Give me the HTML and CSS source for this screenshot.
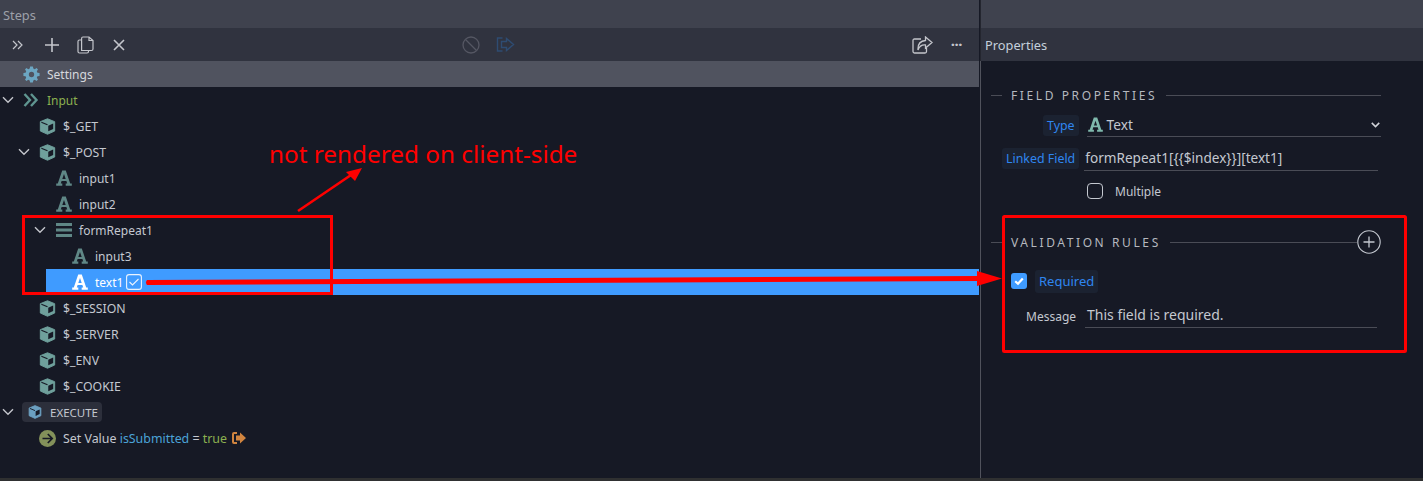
FILE: index.html
```html
<!DOCTYPE html>
<html lang="en">
<head>
<meta charset="utf-8">
<title>Steps</title>
<link rel="stylesheet" href="styles.css">
</head>
<body>
<svg class="defs" width="0" height="0" aria-hidden="true">
  <defs>
    <symbol id="cube" viewBox="0 0 18 18">
      <path fill="currentColor" stroke="currentColor" stroke-width="1" stroke-linejoin="round" d="M9 .8 16.6 3.9V13.8L9 17.2 1.4 13.8V3.9Z"/>
      <path fill="none" stroke="#161925" stroke-width="1.2" d="M2.5 4.4 9 7.2"/>
      <path fill="#161925" d="M9.8 8.1 15 5.8V11.6L9.8 14Z"/>
    </symbol>
    <symbol id="letter" viewBox="0 0 16 16">
      <path fill="currentColor" fill-rule="evenodd" d="M6.2.6H9.8L14.2 13.5H15.8V15.8H9.7V13.5H11.2L10.4 11H5.6L4.8 13.5H6.3V15.8H.2V13.5H1.8ZM8 4 6.3 9H9.7Z"/>
    </symbol>
    <symbol id="chev" viewBox="0 0 12 8">
      <path fill="none" stroke="currentColor" stroke-width="1.4" d="M1 1.2 6 6.2 11 1.2"/>
    </symbol>
  </defs>
</svg>
<main class="app">
  <section class="steps">
    <div class="title-bar">Steps</div>
    <div class="toolbar">
      <div class="tool-group">
        <svg class="tool t-fwd" width="12" height="10" viewBox="0 0 12 10"><path fill="none" stroke="currentColor" stroke-width="1.2" d="M1 1 5 5 1 9M6 1 10 5 6 9"/></svg>
        <svg class="tool t-plus" width="16" height="16" viewBox="0 0 16 16"><path fill="none" stroke="currentColor" stroke-width="1.6" d="M8 1V15M1 8H15"/></svg>
        <svg class="tool t-copy" width="17" height="18" viewBox="0 0 17 18"><path fill="none" stroke="currentColor" stroke-width="1.2" d="M4.6 14.5V2.5Q4.6 1 6 1H12L16 4.5V13Q16 14.5 14.5 14.5ZM4.6 4H2.5Q1 4 1 5.5V15.5Q1 17 2.5 17H10Q11.5 17 11.5 15.5V14.5M12 1V4.5H16"/></svg>
        <svg class="tool t-close" width="12" height="12" viewBox="0 0 12 12"><path fill="none" stroke="currentColor" stroke-width="1.6" d="M1 1 11 11M11 1 1 11"/></svg>
      </div>
      <div class="tool-mid">
        <svg class="dim-grey" width="18" height="18" viewBox="0 0 18 18"><circle cx="9" cy="9" r="8" fill="none" stroke="currentColor" stroke-width="1.3"/><path stroke="currentColor" stroke-width="1.3" d="M3.5 3.5 14.5 14.5"/></svg>
        <svg class="dim-blue" width="19" height="15" viewBox="0 0 19 15"><path fill="none" stroke="currentColor" stroke-width="1.4" d="M6.5 1H1.5V14H6.5M5.5 4.5H10.5V1.5L17.5 7.5 10.5 13.5V10.5H5.5Z"/></svg>
      </div>
      <div class="tool-right">
        <svg class="tool" width="21" height="18" viewBox="0 0 21 18"><path fill="none" stroke="currentColor" stroke-width="1.3" d="M9 3H2.5Q1 3 1 4.5V15.5Q1 17 2.5 17H13Q14.5 17 14.5 15.5V12M13.5 1 20 6.5 13.5 12V9Q8 8.5 6 14 5.5 5 13.5 4.5Z"/></svg>
        <span class="dots">···</span>
      </div>
    </div>
    <div class="settings-row">
      <svg class="gear" width="17" height="17" viewBox="0 0 16 16"><path fill="currentColor" fill-rule="evenodd" d="M6.7.4H9.3L9.7 2.4 11 3 12.8 1.9 14.1 3.2 13 5 13.6 6.3 15.6 6.7V9.3L13.6 9.7 13 11 14.1 12.8 12.8 14.1 11 13 9.7 13.6 9.3 15.6H6.7L6.3 13.6 5 13 3.2 14.1 1.9 12.8 3 11 2.4 9.7.4 9.3V6.7L2.4 6.3 3 5 1.9 3.2 3.2 1.9 5 3 6.3 2.4ZM8 5.5A2.5 2.5 0 1 0 8 10.5 2.5 2.5 0 1 0 8 5.5Z"/></svg>
      <span>Settings</span>
    </div>
    <ul class="tree">
      <li class="row lv0">
        <svg class="chev" width="12" height="8"><use href="#chev"/></svg>
        <svg class="ico-input" width="16" height="14" viewBox="0 0 16 14"><path fill="none" stroke="currentColor" stroke-width="2.4" d="M1.5 1 7 7 1.5 13M8 1 13.5 7 8 13"/></svg>
        <span class="lbl green">Input</span>
      </li>
      <li class="row lv1"><span class="nochev"></span><svg class="cube" width="17" height="17"><use href="#cube"/></svg><span class="lbl">$_GET</span></li>
      <li class="row lv1"><svg class="chev" width="12" height="8"><use href="#chev"/></svg><svg class="cube" width="17" height="17"><use href="#cube"/></svg><span class="lbl">$_POST</span></li>
      <li class="row lv2"><span class="nochev"></span><svg class="let" width="16" height="16"><use href="#letter"/></svg><span class="lbl">input1</span></li>
      <li class="row lv2"><span class="nochev"></span><svg class="let" width="16" height="16"><use href="#letter"/></svg><span class="lbl">input2</span></li>
      <li class="row lv2"><svg class="chev" width="12" height="8"><use href="#chev"/></svg>
        <svg class="let" width="16" height="14" viewBox="0 0 16 14"><path fill="currentColor" d="M0 0H16V3H0ZM0 5.5H16V8.5H0ZM0 11H16V14H0Z"/></svg>
        <span class="lbl">formRepeat1</span></li>
      <li class="row lv3"><span class="nochev"></span><svg class="let" width="16" height="16"><use href="#letter"/></svg><span class="lbl">input3</span></li>
      <li class="row lv3 selected"><span class="nochev"></span><svg class="let" width="16" height="16"><use href="#letter"/></svg><span class="lbl">text1</span>
        <svg class="row-check" width="16" height="16" viewBox="0 0 16 16"><rect x=".6" y=".6" width="14.8" height="14.8" rx="2.5" fill="none" stroke="currentColor" stroke-width="1.1"/><path fill="none" stroke="currentColor" stroke-width="1.1" d="M3.5 8 6.5 11 12.5 5"/></svg>
      </li>
      <li class="row lv1"><span class="nochev"></span><svg class="cube" width="17" height="17"><use href="#cube"/></svg><span class="lbl">$_SESSION</span></li>
      <li class="row lv1"><span class="nochev"></span><svg class="cube" width="17" height="17"><use href="#cube"/></svg><span class="lbl">$_SERVER</span></li>
      <li class="row lv1"><span class="nochev"></span><svg class="cube" width="17" height="17"><use href="#cube"/></svg><span class="lbl">$_ENV</span></li>
      <li class="row lv1"><span class="nochev"></span><svg class="cube" width="17" height="17"><use href="#cube"/></svg><span class="lbl">$_COOKIE</span></li>
      <li class="row lv0">
        <svg class="chev" width="12" height="8"><use href="#chev"/></svg>
        <span class="pill"><svg class="cube-blue" width="14" height="14"><use href="#cube"/></svg><span>EXECUTE</span></span>
      </li>
      <li class="row lv1 action">
        <span class="nochev"></span>
        <svg class="go" width="17" height="17" viewBox="0 0 17 17"><circle cx="8.5" cy="8.5" r="8.5" fill="#83915a"/><path fill="none" stroke="#161925" stroke-width="1.7" d="M3.5 8.5H13M8.8 4 13.2 8.5 8.8 13"/></svg>
        <span class="expr">Set Value <span class="c-blue">isSubmitted</span> = <span class="c-green">true</span></span>
        <svg class="exit" width="14" height="12" viewBox="0 0 14 12"><path fill="#d0843f" fill-rule="evenodd" d="M0 2Q0 0 2 0H5V2H2V10H5V12H2Q0 12 0 10ZM4 3.5H8V.5L14 6 8 11.5V8.5H4Z"/></svg>
      </li>
    </ul>
  </section>
  <aside class="props">
    <div class="title-spacer"></div>
    <div class="props-head">Properties</div>
    <div class="props-body">
      <div class="legend first"><span class="dash"></span><span class="legend-text">FIELD PROPERTIES</span><span class="rule"></span></div>
      <div class="field f-type">
        <span class="tag tag-type">Type</span>
        <div class="select">
          <svg class="sel-ico" width="15" height="15"><use href="#letter"/></svg>
          <span>Text</span>
          <svg class="sel-chev" width="9" height="6" viewBox="0 0 12 8"><path fill="none" stroke="currentColor" stroke-width="2" d="M1 1.2 6 6.2 11 1.2"/></svg>
        </div>
      </div>
      <div class="field f-link">
        <span class="tag tag-link">Linked Field</span>
        <div class="input input-link">formRepeat1[{{$index}}][text1]</div>
      </div>
      <label class="multi"><span class="box"></span><span>Multiple</span></label>
      <div class="legend second"><span class="dash"></span><span class="legend-text">VALIDATION RULES</span><span class="rule"></span>
        <svg class="add" width="24" height="24" viewBox="0 0 24 24"><circle cx="12" cy="12" r="11.2" fill="none" stroke="currentColor" stroke-width="1.1"/><path fill="none" stroke="currentColor" stroke-width="1.3" d="M12 6.5V17.5M6.5 12H17.5"/></svg>
      </div>
      <div class="req">
        <svg width="16" height="16" viewBox="0 0 16 16"><rect width="16" height="16" rx="3" fill="#3f9bff"/><path fill="none" stroke="#fff" stroke-width="2.2" d="M4.2 8.2 7 10.8 11.8 5.4"/></svg>
        <span class="tag tag-req">Required</span>
      </div>
      <div class="field f-msg">
        <span class="msg-label">Message</span>
        <div class="input input-msg">This field is required.</div>
      </div>
    </div>
  </aside>
  <svg class="annot" width="1423" height="481" viewBox="0 0 1423 481" aria-hidden="true">
    <g fill="none" stroke="#ff0000">
      <rect x="23.5" y="216.5" width="308" height="77" stroke-width="3"/>
      <rect x="1003.5" y="216.5" width="402" height="135" stroke-width="3" rx="1"/>
      <path stroke-width="2.6" d="M298 211 351 175"/>
    </g>
    <path fill="#ff0000" d="M362 168 346 172 355 181Z"/>
    <path fill="#ff0000" d="M147 280 978 276 978 281 147 285Q145 282.5 147 280Z"/>
    <path fill="#ff0000" d="M977 271 1002 278.5 977 286Z"/>
    <text class="annot-text" x="269" y="163">not rendered on client-side</text>
  </svg>
</main>
</body>
</html>
```
FILE: styles.css
```css
* { box-sizing: border-box; }
html, body { margin: 0; padding: 0; }
body {
  width: 1423px;
  height: 481px;
  overflow: hidden;
  background: #161925;
  color: #c4c8d0;
  font-family: "Noto Sans", "Open Sans", sans-serif;
  font-size: 12px;
}
.defs { position: absolute; }
.app {
  position: relative;
  display: flex;
  width: 1423px;
  height: 481px;
  border-bottom: 3px solid #2f3031;
}
.steps { width: 979px; flex: none; }
.props { flex: 1; margin-left: 1px; border-left: 1px solid #50525c; }

.title-bar {
  height: 28px;
  line-height: 31px;
  padding-left: 3px;
  background: #3f424e;
  color: #9da0a9;
  font-size: 12.8px;
}
.toolbar {
  height: 33px;
  display: flex;
  align-items: center;
  background: #30333f;
  color: #c4c6cc;
  position: relative;
}
.tool-group { display: flex; align-items: center; padding-left: 12px; }
.t-plus { margin-left: 20px; }
.t-copy { margin-left: 17px; }
.t-close { margin-left: 19px; }
.tool-mid { display: flex; align-items: center; gap: 16px; margin-left: 337px; }
.dim-grey { color: #555763; }
.dim-blue { color: #2e4c72; }
.tool-right { display: flex; align-items: center; margin-left: auto; padding-right: 17px; }
.tool-right .tool { margin-right: 3px; }
.dots { margin-left: 15px; font-size: 15px; font-weight: 700; line-height: 1; letter-spacing: -.5px; }

.settings-row {
  height: 26px;
  display: flex;
  align-items: center;
  padding-left: 23px;
  background: #50535f;
  color: #d6d8dd;
  font-size: 12px;
}
.gear { color: #6ca6c2; margin-right: 7px; }

.tree { list-style: none; margin: 0; padding: 0; }
.row { height: 26px; display: flex; align-items: center; white-space: nowrap; }
.lv0 { padding-left: 1px; }
.lv1 { padding-left: 17px; }
.lv2 { padding-left: 33px; }
.lv3 { padding-left: 49px; }
.chev { width: 12px; height: 8px; flex: none; color: #c4c6cc; margin-left: 1px; margin-right: 9px; }
.lv2 .chev { margin-right: 10px; }
.nochev { width: 22px; flex: none; }
.cube { color: #6fa09c; flex: none; margin-right: 7px; }
.let { color: #5f8786; flex: none; margin-right: 7px; }
.lv2 .nochev, .lv3 .nochev { width: 23px; }
.ico-input { color: #5f9590; margin-right: 8px; flex: none; }
.lbl { font-size: 12px; color: #c4c8d0; }
.lv1 .lbl { font-size: 12.3px; }
.green { color: #8cb050; }
.selected {
  margin-left: 46px;
  padding-left: 3px;
  background: #3f9bff;
  color: #fff;
}
.selected .let { color: #fff; }
.selected .lbl { color: #fff; }
.row-check { margin-left: 3px; color: #eaf3ff; flex: none; }
.pill {
  display: flex;
  align-items: center;
  height: 20px;
  padding: 0 4px 0 6px;
  margin-left: -1px;
  background: #2c2f3b;
  border-radius: 4px;
  color: #c4c8d0;
  font-size: 11.5px;
}
.cube-blue { color: #6b9fc0; margin-right: 8px; }
.go { flex: none; margin-right: 7px; }
.expr { font-size: 12.4px; color: #c4c8d0; }
.c-blue { color: #4ba3d8; }
.c-green { color: #8cb050; }
.exit { margin-left: 5px; flex: none; }

.title-spacer, .props-head { margin-left: -1px; border-left: 1px solid #24262f; }
.title-spacer { height: 28px; background: #3f424e; }
.props-head {
  height: 33px;
  line-height: 34px;
  padding-left: 4px;
  background: #30333f;
  color: #c4d0dc;
  font-size: 12.8px;
}
.props-body { padding: 0 42px 0 10px; }
.legend { display: flex; align-items: center; color: #b5b8bf; }
.first { height: 24px; margin-top: 22px; }
.second { height: 26px; margin-top: 27px; }
.dash { width: 11px; height: 1px; background: #4a4c56; flex: none; }
.legend-text { font-size: 12px; letter-spacing: 2.6px; margin-left: 9px; margin-right: 9px; white-space: nowrap; }
.rule { flex: 1; height: 1px; background: #4a4c56; }
.add { color: #c4c8d0; flex: none; }
.field { display: flex; align-items: center; }
.tag {
  display: inline-block;
  background: #1b2231;
  color: #2f86f0;
  border-radius: 3px;
  font-size: 12.4px;
  line-height: 21px;
  padding: 0 4px;
  white-space: nowrap;
}
.f-type { height: 26px; padding-left: 52px; margin-top: 5px; }
.select {
  flex: 1;
  height: 24px;
  display: flex;
  align-items: center;
  margin-left: 8px;
  border-bottom: 1px solid #4a4c56;
  font-size: 13.7px;
  padding-left: 1px;
  color: #c4c8d0;
}
.sel-ico { color: #7fb8ac; margin-right: 4px; }
.sel-chev { margin-left: auto; margin-right: 1px; color: #d0d2d8; }
.f-link { height: 41px; padding-left: 11px; }
.input {
  flex: 1;
  height: 24px;
  line-height: 22px;
  border-bottom: 1px solid #4a4c56;
  font-size: 14px;
  color: #c4c8d0;
  white-space: nowrap;
}
.input-link { margin-left: 5px; margin-right: 3px; padding-left: 1px; font-size: 13.6px; }
.multi { display: flex; align-items: center; height: 22px; padding-left: 96px; font-size: 12px; margin-top: 1px; }
.box { width: 16px; height: 16px; border: 1px solid #c4c8d0; border-radius: 4px; margin-right: 12px; }
.req { display: flex; align-items: center; gap: 8px; height: 24px; margin-top: 14px; padding-left: 20px; }
.tag-req { font-size: 13px; line-height: 23px; padding: 0 4px; color: #2f86f0; }
.f-msg { height: 32px; padding-left: 35px; margin-top: 7px; color: #c4c8d0; }
.msg-label { font-size: 12px; }
.input-msg { margin-left: 9px; margin-right: 4px; padding-left: 2px; font-size: 14px; }
.annot { position: absolute; left: 0; top: 0; pointer-events: none; }
.annot-text { fill: #ff0000; font-family: "Noto Sans", sans-serif; font-size: 24.3px; }
```
